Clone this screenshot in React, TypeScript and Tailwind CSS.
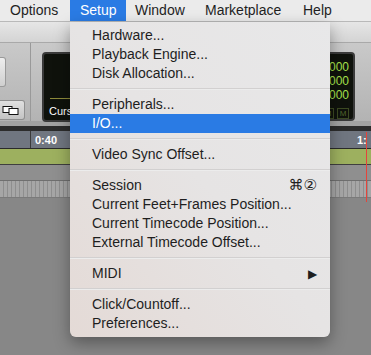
import React from "react";

type Entry =
  | { kind: "item"; label: string; active?: boolean; shortcut?: string; submenu?: boolean }
  | { kind: "sep" };

const entries: Entry[] = [
  { kind: "item", label: "Hardware..." },
  { kind: "item", label: "Playback Engine..." },
  { kind: "item", label: "Disk Allocation..." },
  { kind: "sep" },
  { kind: "item", label: "Peripherals..." },
  { kind: "item", label: "I/O...", active: true },
  { kind: "sep" },
  { kind: "item", label: "Video Sync Offset..." },
  { kind: "sep" },
  { kind: "item", label: "Session", shortcut: "⌘②" },
  { kind: "item", label: "Current Feet+Frames Position..." },
  { kind: "item", label: "Current Timecode Position..." },
  { kind: "item", label: "External Timecode Offset..." },
  { kind: "sep" },
  { kind: "item", label: "MIDI", submenu: true },
  { kind: "sep" },
  { kind: "item", label: "Click/Countoff..." },
  { kind: "item", label: "Preferences..." },
];

// label + fixed width so the titles land where the screenshot has them
const menuBar = [
  { label: "Options", cls: "w-[70px] pl-[10px]" },
  { label: "Setup", cls: "w-[56px] pl-[10px] bg-[#2a7be4] text-white" },
  { label: "Window", cls: "w-[70px] pl-[9px]" },
  { label: "Marketplace", cls: "w-[98px] pl-[9px]" },
  { label: "Help", cls: "w-[50px] pl-[9px]" },
];

function Counter({ rows }: { rows: string[] }) {
  return (
    <div className="flex flex-col gap-[1px] text-[12px] leading-[13px] text-[#a6e04c]">
      {rows.map((r, i) => (
        <span key={i}>{r}</span>
      ))}
    </div>
  );
}

export default function App() {
  return (
    <div className="relative w-[371px] h-[355px] overflow-hidden bg-[#878787] font-['Liberation_Sans',Arial,sans-serif]">
      {/* menu bar */}
      <div className="flex h-[22px] bg-[#ebebeb] border-b border-[#b9b9b9] text-[14px] text-[#1f1f1f]">
        {menuBar.map((m) => (
          <div key={m.label} className={`flex items-center shrink-0 ${m.cls}`}>
            {m.label}
          </div>
        ))}
      </div>

      {/* toolbar strip */}
      <div className="h-[21px] bg-gradient-to-b from-[#e6e6e6] to-[#d4d4d4] border-b border-[#a9a9a9]" />

      {/* transport / counters panel */}
      <div className="flex h-[78px] bg-gradient-to-b from-[#c9c9c9] to-[#b3b3b3]">
        <div className="flex flex-col justify-between w-[31px] pt-[14px] pb-[1px] border-r border-[#999]">
          <div className="w-[6px] h-[30px] bg-gradient-to-b from-[#eeeeee] to-[#cfcfcf] rounded-r-[3px] border border-l-0 border-[#9a9a9a]" />
          <div className="flex items-center w-[25px] h-[20px] bg-gradient-to-b from-[#e0e0e0] to-[#c4c4c4] border border-l-0 border-[#8f8f8f] rounded-r-[3px] pl-[2px]">
            <svg width="18" height="10" viewBox="0 0 18 10">
              <rect x="1" y="1.5" width="9" height="6" fill="#fff" stroke="#111" strokeWidth="1" />
              <rect x="7" y="3.5" width="9" height="6" fill="#fff" stroke="#111" strokeWidth="1" />
            </svg>
          </div>
        </div>
        <div className="flex-1 flex justify-between pl-[11px] pt-[9px] pr-[16px]">
          <div className="w-[60px] h-[70px] bg-[#0f120c] border-[2px] border-[#3a3a3a] rounded-l-[4px] flex flex-col justify-end">
            <div className="h-px bg-[#8d8a3a] mb-[5px] ml-[6px]" />
            <div className="text-[11px] leading-[14px] text-white pl-[5px] mb-[2px]">Cursor</div>
          </div>
          <div className="w-[60px] h-[69px] bg-[#0f120c] border-[2px] border-[#3a3a3a] rounded-r-[4px] flex flex-col items-end pr-[4px] pt-[7px]">
            <Counter rows={["0:00.000", "0:00.000", "0:00.000"]} />
            <div className="flex gap-[3px] mt-[6px]">
              <div className="w-[12px] h-[11px] border border-[#3c4a22] text-[8px] leading-[9px] text-[#52652c] text-center">M</div>
              <div className="w-[12px] h-[11px] border border-[#3c4a22] text-[8px] leading-[9px] text-[#52652c] text-center">M</div>
            </div>
          </div>
        </div>
      </div>

      {/* timeline */}
      <div className="h-[5px] bg-[#a2a2a2]" />
      <div className="h-[5px] bg-[#2c2c2c]" />
      <div className="flex h-[18px] bg-[#707680] border-b border-[#2a2a2a] text-[11px] font-bold text-white">
        <div className="w-[31px] border-r border-[#3a3a3a]" />
        <div className="flex-1 pl-[4px] leading-[18px]">0:40</div>
        <div className="w-[14px] leading-[18px]">1:</div>
      </div>
      <div className="h-[16px] bg-[#9db05f] border-b border-[#3f3f3f]" />
      <div className="h-[16px] bg-[#8f8f8f] border-b border-[#6f6f6f]" />
      <div className="h-[17px] bg-[repeating-linear-gradient(90deg,#a6a6a6_0px,#a6a6a6_3px,#8e8e8e_3px,#8e8e8e_4px)] border-b border-[#7a7a7a]" />

      {/* playhead */}
      <div className="absolute left-[366px] top-[132px] w-px h-[70px] bg-[#e5443b]" />

      {/* Setup menu */}
      <div className="absolute left-[70px] top-[22px] w-[260px] pt-[4px] pb-[4px] rounded-b-[6px] bg-gradient-to-tr from-[#e4dad6] via-[#e6e4e4] to-[#e8e8e9] shadow-[0_6px_16px_rgba(0,0,0,0.35)] text-[14px] text-[#1e1e1e]">
        {entries.map((e, i) =>
          e.kind === "sep" ? (
            <div key={i} className="h-[12px] flex items-center">
              <div className="w-full h-[2px] bg-[#d2d0d0] border-b border-[#ececec]" />
            </div>
          ) : (
            <div
              key={i}
              className={`flex items-center justify-between h-[19px] pl-[22px] pr-[12px] ${
                e.active ? "bg-[#2a7be4] text-white" : ""
              }`}
            >
              <span>{e.label}</span>
              {e.shortcut && <span className="font-['DejaVu_Sans',sans-serif] text-[15px] pr-[1px]">{e.shortcut}</span>}
              {e.submenu && <span className="text-[12px] pr-[1px]">▶</span>}
            </div>
          )
        )}
      </div>
    </div>
  );
}
